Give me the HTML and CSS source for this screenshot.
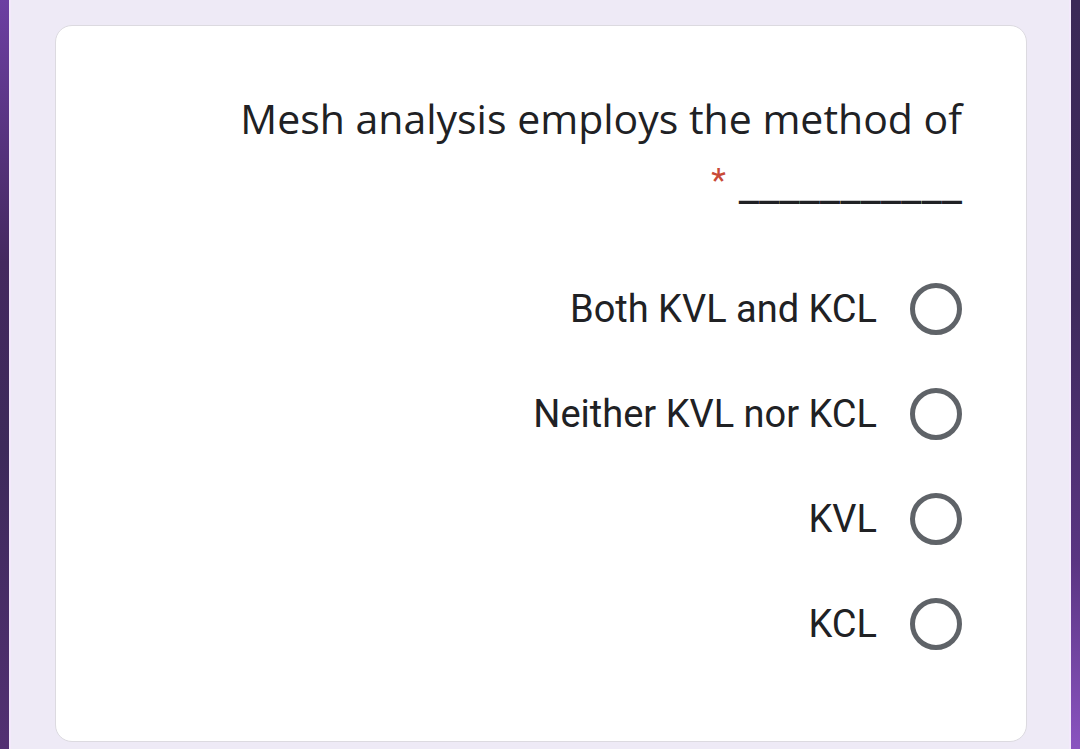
FILE: index.html
```html
<!DOCTYPE html>
<html lang="en">
<head>
<meta charset="utf-8">
<title>Question</title>
<link rel="stylesheet" href="styles.css">
</head>
<body>
<div class="page">
  <div class="strip strip-left"></div>
  <main class="main">
    <section class="card">
      <div class="question">
        <div class="q-line">Mesh analysis employs the method of</div>
        <div class="q-line q-second"><span class="req">*</span> <span class="blank">___________</span></div>
      </div>
      <ul class="options">
        <li class="option"><span class="label">Both KVL and KCL</span><span class="radio"></span></li>
        <li class="option"><span class="label">Neither KVL nor KCL</span><span class="radio"></span></li>
        <li class="option"><span class="label">KVL</span><span class="radio"></span></li>
        <li class="option"><span class="label">KCL</span><span class="radio"></span></li>
      </ul>
    </section>
  </main>
  <div class="strip strip-right"></div>
</div>
</body>
</html>
```
FILE: styles.css
```css
html, body {
  margin: 0;
  padding: 0;
  height: 100%;
}
body {
  background: #eeeaf6;
  overflow: hidden;
}
.page {
  display: flex;
  height: 749px;
}
.strip {
  width: 9px;
  flex: 0 0 9px;
}
.strip-left {
  background: linear-gradient(to bottom, #6c3fa2 0%, #44295f 35%, #3d2a5a 60%, #523072 100%);
  box-shadow: 2px 0 0 #f3e9fb;
}
.strip-right {
  background: linear-gradient(to bottom, #3b2957 0%, #3e2a5c 40%, #5a3582 75%, #8a54c0 100%);
  box-shadow: -2px 0 0 #f3e9fb;
}
.main {
  flex: 1;
  padding: 25px 44px 7px 46px;
  box-sizing: border-box;
}
.card {
  height: 100%;
  box-sizing: border-box;
  background: #ffffff;
  border: 1.5px solid #dcdae0;
  border-radius: 17px;
  padding: 62px 64px 0 64px;
  direction: rtl;
}
.question {
  font-family: "Open Sans", "Liberation Sans", sans-serif;
  font-size: 41px;
  color: #202124;
  text-align: right;
}
.q-line {
  line-height: 60px;
  direction: ltr;
}
.q-second {
  margin-top: 7px;
  word-spacing: 2px;
}
.req {
  color: #c94a37;
  font-family: "Roboto", sans-serif;
  font-size: 34px;
  line-height: 0;
  vertical-align: 9px;
}
.blank {
  font-family: "Roboto", sans-serif;
  font-size: 45px;
  color: #202124;
  word-spacing: 0;
}
.options {
  list-style: none;
  margin: 40px 0 0 0;
  padding: 0;
}
.option {
  display: flex;
  flex-direction: row;
  align-items: center;
  justify-content: flex-start;
  gap: 33px;
  height: 105px;
  direction: rtl;
}
.option .radio {
  order: -1;
}
.label {
  direction: ltr;
  font-family: "Roboto", sans-serif;
  font-size: 38px;
  color: #202124;
}
.radio {
  width: 52px;
  height: 52px;
  box-sizing: border-box;
  border: 5px solid #5f6368;
  border-radius: 50%;
  flex: 0 0 52px;
}
```
